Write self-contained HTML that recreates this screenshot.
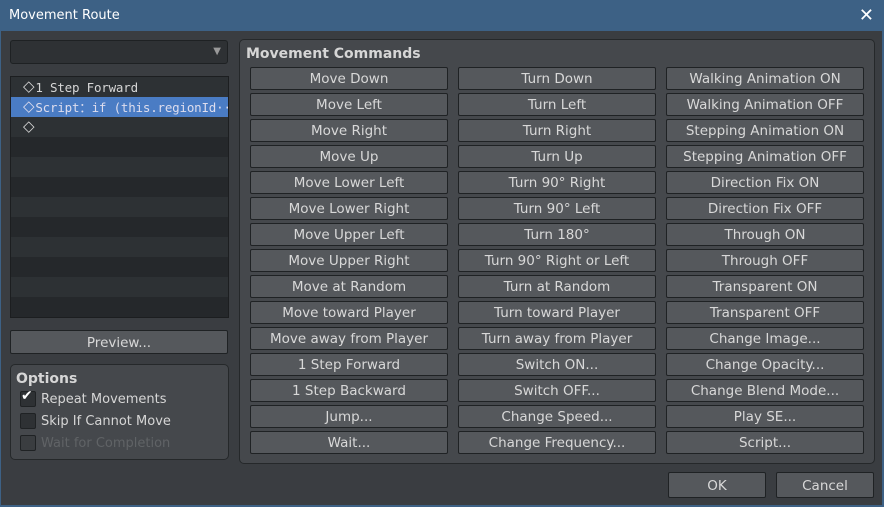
<!DOCTYPE html><html><head><style>
*{box-sizing:border-box;margin:0;padding:0}
body{width:884px;height:507px;background:#3d6185;font-family:"DejaVu Sans","Liberation Sans",sans-serif;font-size:13px;color:#d6d6d6;position:relative;overflow:hidden}
.a{position:absolute}
#title{left:0;top:0;width:884px;height:31px;background:#3d6185;color:#fff;font-size:13px;line-height:32px;padding-left:9px}
#body{left:1px;top:31px;width:881px;height:474px;background:#3a3d41}
.btn{position:absolute;background:#55585c;border:1px solid #1f2224;border-radius:2px;text-align:center;line-height:22px;color:#d8d8d8;font-size:13.5px;white-space:nowrap;overflow:hidden}
.row{position:absolute;left:0;width:218px;height:20px;line-height:21px;font-family:"DejaVu Sans Mono","Liberation Mono",monospace;font-size:12.5px;padding-left:12px;white-space:nowrap;overflow:hidden;letter-spacing:-0.2px}
.d{font-family:"DejaVu Sans",sans-serif;font-size:15px;line-height:18px;vertical-align:top;margin-right:1px}
.cb{position:absolute;left:9px;width:16px;height:16px;background:#2e3134;border:1px solid #1f2224;border-radius:2px}
</style></head><body>
<div class="a" id="title">Movement Route</div>
<div class="a" style="right:10px;top:5px;color:#fff;font-size:18px">✕</div>
<div class="a" id="body"></div>
<div class="a" style="left:10px;top:40px;width:218px;height:24px;background:#2e3134;border:1px solid #1e2123;border-radius:3px"><span class="a" style="right:6px;top:5px;font-size:10px;color:#999">▼</span></div>
<div class="a" style="left:10px;top:76px;width:219px;height:242px;border:1px solid #1c1e20;background:#25282b;overflow:hidden">
<div class="row" style="top:0;background:#2d3134"><span class="d">◇</span>1 Step Forward</div>
<div class="row" style="top:20px;background:#4a7cc4;color:#dde"><span class="d">◇</span>Script：if (this.regionId···</div>
<div class="row" style="top:40px;background:#2d3134"><span class="d">◇</span></div>
<div class="row" style="top:80px;background:#2d3134"></div>
<div class="row" style="top:120px;background:#2d3134"></div>
<div class="row" style="top:160px;background:#2d3134"></div>
<div class="row" style="top:200px;background:#2d3134"></div>
</div>
<div class="btn" style="left:10px;top:330px;width:218px;height:24px;line-height:24px">Preview...</div>
<div class="a" style="left:10px;top:364px;width:219px;height:96px;background:#45484c;border:1px solid #25282a;border-radius:5px">
<div class="a" style="left:5px;top:6px;font-weight:bold;font-size:14px">Options</div>
<div class="cb" style="top:26px"></div><div class="a" style="left:10px;top:23px;font-size:14px;color:#fff">✔</div>
<div class="a" style="left:30px;top:27px">Repeat Movements</div>
<div class="cb" style="top:48px"></div><div class="a" style="left:30px;top:49px">Skip If Cannot Move</div>
<div class="cb" style="top:70px;background:#3a3d40"></div><div class="a" style="left:30px;top:71px;color:#606366">Wait for Completion</div>
</div>
<div class="a" style="left:239px;top:39px;width:636px;height:425px;background:#45484c;border:1px solid #25282a;border-radius:5px">
<div class="a" style="left:6px;top:6px;font-weight:bold;font-size:14px">Movement Commands</div>
</div>
<div id="cmds"></div>
<div class="btn" style="left:668px;top:472px;width:98px;height:26px;line-height:26px">OK</div>
<div class="btn" style="left:776px;top:472px;width:98px;height:26px;line-height:26px">Cancel</div>
<script>
var c=[["Move Down","Move Left","Move Right","Move Up","Move Lower Left","Move Lower Right","Move Upper Left","Move Upper Right","Move at Random","Move toward Player","Move away from Player","1 Step Forward","1 Step Backward","Jump...","Wait..."],
["Turn Down","Turn Left","Turn Right","Turn Up","Turn 90° Right","Turn 90° Left","Turn 180°","Turn 90° Right or Left","Turn at Random","Turn toward Player","Turn away from Player","Switch ON...","Switch OFF...","Change Speed...","Change Frequency..."],
["Walking Animation ON","Walking Animation OFF","Stepping Animation ON","Stepping Animation OFF","Direction Fix ON","Direction Fix OFF","Through ON","Through OFF","Transparent ON","Transparent OFF","Change Image...","Change Opacity...","Change Blend Mode...","Play SE...","Script..."]];
var h="",xs=[250,458,666];
for(var i=0;i<3;i++)for(var j=0;j<15;j++)h+='<div class="btn" style="left:'+xs[i]+'px;top:'+(67+26*j)+'px;width:198px;height:23px">'+c[i][j]+'</div>';
document.getElementById("cmds").innerHTML=h;
</script>
</body></html>
